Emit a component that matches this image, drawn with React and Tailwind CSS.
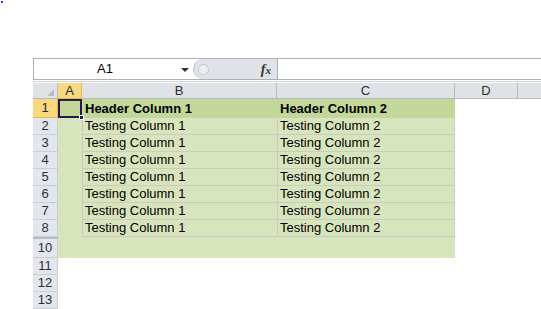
import React from 'react'

const COLS = [
  { key: 'A', label: 'A', w: 'w-[24px]' },
  { key: 'B', label: 'B', w: 'w-[195px]' },
  { key: 'C', label: 'C', w: 'w-[178px]' },
  { key: 'D', label: 'D', w: 'w-[63px]' },
  { key: 'E', label: '', w: 'flex-1' },
]

const DATA_ROWS = [2, 3, 4, 5, 6, 7, 8]

function RowHead({ n, active, h, extraTop }) {
  return (
    <div
      className={`${h} w-[25px] shrink-0 flex items-center justify-center text-[13px] border-b border-r ${
        active
          ? 'bg-[#f9d880] border-[#e9b54f] text-[#2a2a2a]'
          : 'bg-[#e3e7ed] border-[#c9ced5] text-[#2f2f2f]'
      } ${extraTop ? 'border-t-2 border-t-[#b9bec5]' : ''}`}
    >
      {n}
    </div>
  )
}

export default function App() {
  return (
    <div className="w-[541px] h-[309px] bg-white overflow-hidden font-['Liberation_Sans',Arial,sans-serif]">
      <div className="h-[2px] w-[2px] ml-px mt-px bg-[#2b3cff]" />

      <div className="mt-[55px] ml-[33px]">
        {/* formula bar */}
        <div className="flex h-[22px] border-y border-[#aab0b8] bg-white">
          <div className="w-[160px] shrink-0 flex items-center border-l border-[#aab0b8] relative">
            <span className="pl-[63px] text-[13px] text-black">A1</span>
            <span className="absolute left-[147px] top-[9px] w-0 h-0 border-l-[4px] border-r-[4px] border-t-[4px] border-l-transparent border-r-transparent border-t-[#333]" />
          </div>
          <div className="w-[84px] shrink-0 flex items-center rounded-l-full bg-[#dfe2e7] border-l border-[#b8bdc4]">
            <span className="ml-[4px] w-[11px] h-[11px] rounded-full bg-[#eceef1] border border-[#c6cad0]" />
            <span className="ml-auto mr-[6px] text-[14px] italic font-bold font-['Liberation_Serif',serif] text-[#333]">
              f<span className="text-[11px]">x</span>
            </span>
          </div>
          <div className="flex-1 border-l border-[#aab0b8]" />
        </div>
        <div className="h-px" />
        <div className="h-px bg-[#d3d7dd]" />
        <div className="h-px" />

        {/* column headers */}
        <div className="flex h-[16px]">
          <div className="w-[25px] shrink-0 bg-[#dfe3e8] border-r border-b border-[#b5bac1] relative">
            <span className="absolute right-[3px] bottom-[2px] w-0 h-0 [border-bottom:7px_solid_#b7bcc3] [border-left:7px_solid_transparent]" />
          </div>
          {COLS.map((c) => (
            <div
              key={c.key}
              className={`${c.w} shrink-0 flex items-center justify-center text-[13px] border-b ${
                c.key === 'E' ? '' : 'border-r'
              } ${
                c.key === 'A'
                  ? 'bg-[#f9d880] border-[#e9b54f] text-[#2a2a2a]'
                  : 'bg-[#dfe3e8] border-[#b5bac1] text-[#2f2f2f]'
              }`}
            >
              {c.label}
            </div>
          ))}
        </div>

        {/* row 1 */}
        <div className="flex h-[19px]">
          <RowHead n={1} active h="h-[19px]" />
          <div className="w-[24px] shrink-0 bg-[#c4d79b] border-2 border-[#231c47] relative">
            <span className="absolute -right-[4px] -bottom-[4px] w-[5px] h-[5px] bg-[#231c47] border border-white" />
          </div>
          <div className="w-[195px] shrink-0 bg-[#c4d79b] flex items-center pl-[3px] text-[13px] font-bold text-black">
            Header Column 1
          </div>
          <div className="w-[178px] shrink-0 bg-[#c4d79b] flex items-center pl-[3px] text-[13px] font-bold text-black">
            Header Column 2
          </div>
          <div className="flex-1" />
        </div>

        {/* data rows */}
        {DATA_ROWS.map((n) => (
          <div key={n} className="flex h-[17px]">
            <RowHead n={n} h="h-[17px]" />
            <div className="w-[24px] shrink-0 bg-[#d8e4bc]" />
            <div className="w-[195px] shrink-0 bg-[#d8e4bc] flex items-center pl-[2px] text-[13px] text-black border-l border-b border-[#c9cbc4]">
              Testing Column 1
            </div>
            <div className="w-[178px] shrink-0 bg-[#d8e4bc] flex items-center pl-[2px] text-[13px] text-black border-l border-r border-b border-[#c9cbc4]">
              Testing Column 2
            </div>
            <div className="flex-1" />
          </div>
        ))}

        {/* row 10 (row 9 hidden) */}
        <div className="flex h-[21px]">
          <RowHead n={10} h="h-[21px]" extraTop />
          <div className="w-[397px] shrink-0 bg-[#d8e4bc]" />
          <div className="flex-1" />
        </div>

        {[11, 12, 13].map((n) => (
          <div key={n} className="flex h-[17px]">
            <RowHead n={n} h="h-[17px]" />
            <div className="flex-1" />
          </div>
        ))}
      </div>
    </div>
  )
}
